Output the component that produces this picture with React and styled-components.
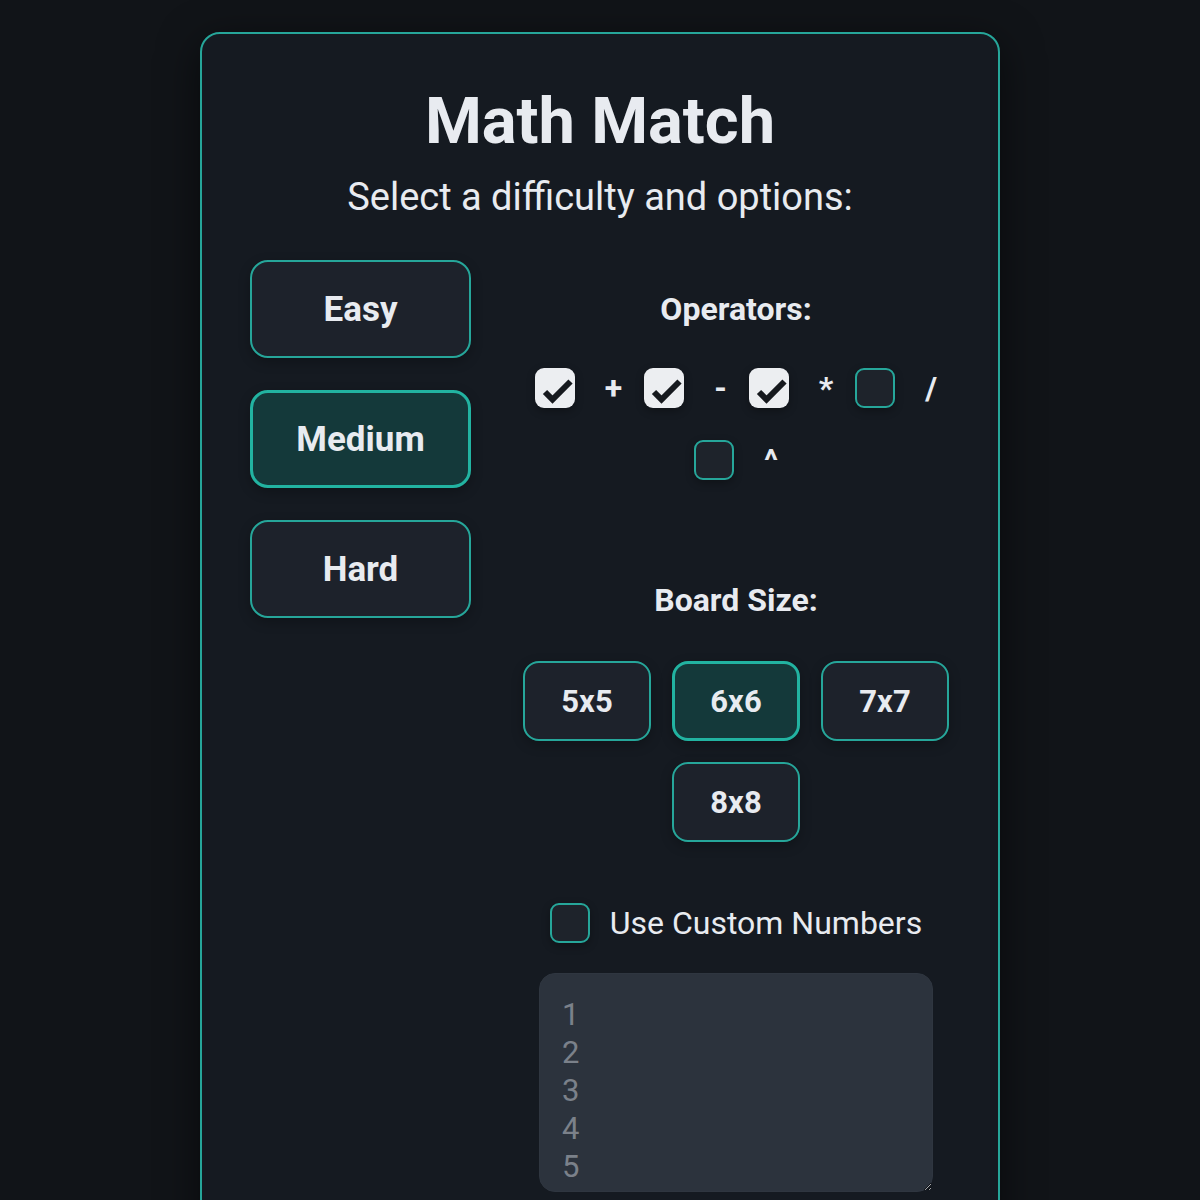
import React, { useState } from 'react';
import styled, { createGlobalStyle } from 'styled-components';

const teal = '#26a69a';
const tealBright = '#22b3a1';
const text = '#e8ebf0';

const GlobalStyle = createGlobalStyle`
  html, body {
    margin: 0;
    padding: 0;
    background: #111418;
    font-family: Roboto, "Noto Sans", "Liberation Sans", sans-serif;
    color: ${text};
  }
  * {
    box-sizing: border-box;
  }
`;

const Page = styled.div`
  min-height: 1200px;
  padding-top: 32px;
  display: flex;
  justify-content: center;
`;

const Card = styled.div`
  width: 800px;
  background: #151a21;
  border: 2px solid ${teal};
  border-radius: 20px;
  box-shadow: 0 10px 40px rgba(0, 0, 0, 0.55);
  padding: 48px 48px 64px;
  display: flex;
  flex-direction: column;
  align-items: center;
`;

const Title = styled.h1`
  margin: 0;
  font-size: 65px;
  line-height: 78px;
  font-weight: 700;
`;

const Subtitle = styled.p`
  margin: 14px 0 0;
  font-size: 38px;
  line-height: 46px;
  font-weight: 400;
`;

const Columns = styled.div`
  margin-top: 40px;
  width: 100%;
  display: flex;
  gap: 50px;
  align-items: flex-start;
`;

const DifficultyList = styled.div`
  width: 221px;
  flex: none;
  display: flex;
  flex-direction: column;
  gap: 32px;
`;

const OptionButton = styled.button`
  font-family: inherit;
  font-weight: 700;
  color: ${text};
  cursor: pointer;
  display: flex;
  align-items: center;
  justify-content: center;
  background: ${({ active }) => (active ? '#14393a' : '#1d222b')};
  border: ${({ active }) => (active ? `3px solid ${tealBright}` : `2px solid ${teal}`)};
  box-shadow: 0 4px 12px rgba(0, 0, 0, 0.25);
`;

const DifficultyButton = styled(OptionButton)`
  height: 98px;
  border-radius: 18px;
  font-size: 35px;
`;

const Options = styled.div`
  flex: 1;
  display: flex;
  flex-direction: column;
  align-items: center;
`;

const Heading = styled.h3`
  margin: ${({ top }) => top}px 0 0;
  font-size: 32px;
  line-height: 38px;
  font-weight: 700;
`;

const OperatorGrid = styled.div`
  margin-top: 40px;
  display: flex;
  flex-wrap: wrap;
  justify-content: center;
  column-gap: 22px;
  row-gap: 32px;
`;

const OperatorItem = styled.label`
  display: flex;
  align-items: center;
  gap: 30px;
  cursor: pointer;
  font-size: 32px;
  font-weight: 700;
  line-height: 40px;
`;

const Box = styled.span`
  width: 40px;
  height: 40px;
  flex: none;
  border-radius: 9px;
  display: flex;
  align-items: center;
  justify-content: center;
  background: ${({ checked }) => (checked ? '#eceef1' : '#1e232b')};
  border: ${({ checked }) => (checked ? 'none' : `2px solid ${teal}`)};
  box-shadow: 0 3px 8px rgba(0, 0, 0, 0.3);

  svg {
    width: 40px;
    height: 40px;
  }
`;

const SizeGrid = styled.div`
  margin-top: 42px;
  width: 430px;
  display: flex;
  flex-wrap: wrap;
  justify-content: center;
  gap: 21px;
`;

const SizeButton = styled(OptionButton)`
  width: 128px;
  height: 80px;
  border-radius: 16px;
  font-size: 31px;
`;

const CustomRow = styled.label`
  margin-top: 61px;
  display: flex;
  align-items: center;
  gap: 20px;
  font-size: 32px;
  line-height: 40px;
  cursor: pointer;
`;

const Numbers = styled.textarea`
  margin-top: 30px;
  width: 394px;
  height: 219px;
  padding: 22px 22px 7px;
  background: #2c333d;
  border: 1px solid #2f3640;
  border-radius: 16px;
  color: ${text};
  font-family: inherit;
  font-size: 31px;
  line-height: 38px;
  outline: none;
  overflow: hidden;

  &::placeholder {
    color: #7b818a;
  }
`;

const Check = () => (
  <svg viewBox="0 0 40 40">
    <path
      d="M10 24 L17.5 31.5 L35.5 13.5"
      fill="none"
      stroke="#16191e"
      strokeWidth="6"
      strokeLinejoin="miter"
    />
  </svg>
);

const Checkbox = ({ checked, onToggle }) => (
  <Box checked={checked} onClick={onToggle}>
    {checked && <Check />}
  </Box>
);

const difficulties = ['Easy', 'Medium', 'Hard'];
const operators = ['+', '-', '*', '/', '^'];
const sizes = ['5x5', '6x6', '7x7', '8x8'];

const App = () => {
  const [difficulty, setDifficulty] = useState('Medium');
  const [ops, setOps] = useState({ '+': true, '-': true, '*': true, '/': false, '^': false });
  const [size, setSize] = useState('6x6');
  const [custom, setCustom] = useState(false);

  return (
    <>
      <GlobalStyle />
      <Page>
        <Card>
          <Title>Math Match</Title>
          <Subtitle>Select a difficulty and options:</Subtitle>
          <Columns>
            <DifficultyList>
              {difficulties.map((d) => (
                <DifficultyButton
                  key={d}
                  active={d === difficulty}
                  onClick={() => setDifficulty(d)}
                >
                  {d}
                </DifficultyButton>
              ))}
            </DifficultyList>
            <Options>
              <Heading top={30}>Operators:</Heading>
              <OperatorGrid>
                {operators.map((op) => (
                  <OperatorItem key={op}>
                    <Checkbox
                      checked={ops[op]}
                      onToggle={() => setOps({ ...ops, [op]: !ops[op] })}
                    />
                    {op}
                  </OperatorItem>
                ))}
              </OperatorGrid>
              <Heading top={101}>Board Size:</Heading>
              <SizeGrid>
                {sizes.map((s) => (
                  <SizeButton key={s} active={s === size} onClick={() => setSize(s)}>
                    {s}
                  </SizeButton>
                ))}
              </SizeGrid>
              <CustomRow>
                <Checkbox checked={custom} onToggle={() => setCustom(!custom)} />
                Use Custom Numbers
              </CustomRow>
              <Numbers placeholder={'1\n2\n3\n4\n5'} />
            </Options>
          </Columns>
        </Card>
      </Page>
    </>
  );
};

export default App;
